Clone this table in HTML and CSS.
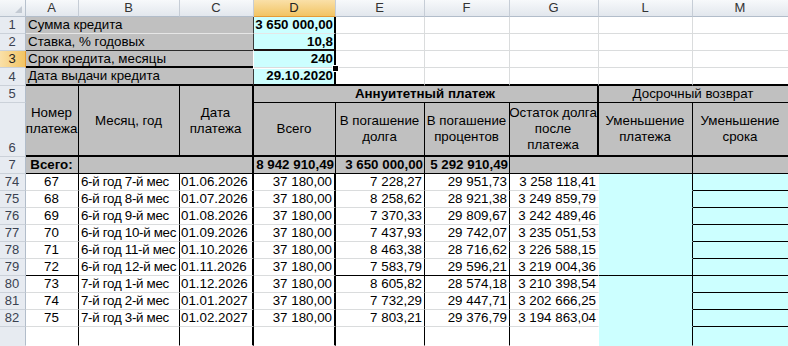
FILE: index.html
```html
<!DOCTYPE html>
<html lang="ru">
<head>
<meta charset="utf-8">
<title>Кредит</title>
<link rel="stylesheet" href="styles.css">
</head>
<body>
<div class="sheet">
  <div class="corner"><span class="tri"></span></div>
  <div class="ch">A</div><div class="ch">B</div><div class="ch">C</div><div class="ch chs">D</div><div class="ch">E</div><div class="ch">F</div><div class="ch">G</div><div class="ch">L</div><div class="ch nr">M</div>

  <div class="rh">1</div>
  <div class="g s3 bbl brd">Сумма кредита</div>
  <div class="cy r b bbl br2">3 650 000,00</div>
  <div></div><div></div><div></div><div></div><div class="nr"></div>

  <div class="rh">2</div>
  <div class="g s3 bbd brd">Ставка, % годовых</div>
  <div class="cy r b br2">10,8</div>
  <div></div><div></div><div></div><div></div><div class="nr"></div>

  <div class="rh rhs">3</div>
  <div class="g s3 bb2 brd">Срок кредита, месяцы</div>
  <div class="cy r b br2">240</div>
  <div></div><div></div><div></div><div></div><div class="nr"></div>

  <div class="rh">4</div>
  <div class="g s3 bb2 brd">Дата выдачи кредита</div>
  <div class="cy r b br2 bb2">29.10.2020</div>
  <div class="bb2"></div><div class="bb2"></div><div class="bb2"></div><div class="bb2"></div><div class="bb2 nr"></div>

  <div class="rh">5</div>
  <div class="g c v2 br1 bb2">Номер<br>платежа</div>
  <div class="g c v2 br1 bb2">Месяц, год</div>
  <div class="g c v2 br2 bb2">Дата<br>платежа</div>
  <div class="g c b s4 br2 bb1">Аннуитетный платеж</div>
  <div class="g c s2 bb1 nr">Досрочный возврат</div>

  <div class="rh">6</div>
  <div class="g c br1 bb2">Всего</div>
  <div class="g c br1 bb2">В погашение<br>долга</div>
  <div class="g c br1 bb2">В погашение<br>процентов</div>
  <div class="g c br2 bb2">Остаток долга<br>после<br>платежа</div>
  <div class="g c br1 bb2">Уменьшение<br>платежа</div>
  <div class="g c bb2 nr">Уменьшение<br>срока</div>

  <div class="rh">7</div>
  <div class="g c b br1 bb1">Всего:</div>
  <div class="g s2 br2 bb1"></div>
  <div class="g r b br1 bb1">8 942 910,49</div>
  <div class="g r b br1 bb1">3 650 000,00</div>
  <div class="g r b br1 bb1">5 292 910,49</div>
  <div class="g s2 br1 bb1"></div>
  <div class="g bb1 nr"></div>

  <div class="rh">74</div>
  <div class="c br1">67</div><div class="t br1">6-й год 7-й мес</div><div class="br2">01.06.2026</div>
  <div class="r br2">37 180,00</div><div class="r br1">7 228,27</div><div class="r br1">29 951,73</div><div class="r brn">3 258 118,41</div>
  <div class="cy br1 bbn"></div><div class="cy bb1 nr"></div>

  <div class="rh">75</div>
  <div class="c br1">68</div><div class="t br1">6-й год 8-й мес</div><div class="br2">01.07.2026</div>
  <div class="r br2">37 180,00</div><div class="r br1">8 258,62</div><div class="r br1">28 921,38</div><div class="r brn">3 249 859,79</div>
  <div class="cy br1 bbn"></div><div class="cy bb1 nr"></div>

  <div class="rh">76</div>
  <div class="c br1">69</div><div class="t br1">6-й год 9-й мес</div><div class="br2">01.08.2026</div>
  <div class="r br2">37 180,00</div><div class="r br1">7 370,33</div><div class="r br1">29 809,67</div><div class="r brn">3 242 489,46</div>
  <div class="cy br1 bbn"></div><div class="cy bb1 nr"></div>

  <div class="rh">77</div>
  <div class="c br1">70</div><div class="t br1">6-й год 10-й мес</div><div class="br2">01.09.2026</div>
  <div class="r br2">37 180,00</div><div class="r br1">7 437,93</div><div class="r br1">29 742,07</div><div class="r brn">3 235 051,53</div>
  <div class="cy br1 bbn"></div><div class="cy bb1 nr"></div>

  <div class="rh">78</div>
  <div class="c br1">71</div><div class="t br1">6-й год 11-й мес</div><div class="br2">01.10.2026</div>
  <div class="r br2">37 180,00</div><div class="r br1">8 463,38</div><div class="r br1">28 716,62</div><div class="r brn">3 226 588,15</div>
  <div class="cy br1 bbn"></div><div class="cy bb1 nr"></div>

  <div class="rh">79</div>
  <div class="c br1 bb1">72</div><div class="t br1">6-й год 12-й мес</div><div class="br2">01.11.2026</div>
  <div class="r br2">37 180,00</div><div class="r br1 bb1">7 583,79</div><div class="r br1 bb1">29 596,21</div><div class="r brn bb1">3 219 004,36</div>
  <div class="cy br1 bb1"></div><div class="cy bb1 nr"></div>

  <div class="rh">80</div>
  <div class="c br1">73</div><div class="t br1">7-й год 1-й мес</div><div class="br2">01.12.2026</div>
  <div class="r br2">37 180,00</div><div class="r br1">8 605,82</div><div class="r br1">28 574,18</div><div class="r brn">3 210 398,54</div>
  <div class="cy br1 bbn"></div><div class="cy bb1 nr"></div>

  <div class="rh">81</div>
  <div class="c br1">74</div><div class="t br1">7-й год 2-й мес</div><div class="br2">01.01.2027</div>
  <div class="r br2">37 180,00</div><div class="r br1">7 732,29</div><div class="r br1">29 447,71</div><div class="r brn">3 202 666,25</div>
  <div class="cy br1 bbn"></div><div class="cy bb1 nr"></div>

  <div class="rh">82</div>
  <div class="c br1">75</div><div class="t br1">7-й год 3-й мес</div><div class="br2">01.02.2027</div>
  <div class="r br2">37 180,00</div><div class="r br1">7 803,21</div><div class="r br1">29 376,79</div><div class="r brn">3 194 863,04</div>
  <div class="cy br1 bbn"></div><div class="cy bb1 nr"></div>

  <div class="rh bbn"></div>
  <div class="br1 bbn"></div><div class="br1 bbn"></div><div class="br2 bbn"></div>
  <div class="br2 bbn"></div><div class="br1 bbn"></div><div class="br1 bbn"></div><div class="brn bbn"></div>
  <div class="cy br1 bbn"></div><div class="cy bbn nr"></div>

  <div class="sel"><span class="handle"></span></div>
</div>
</body>
</html>
```
FILE: styles.css
```css
body {
  margin: 0;
  background: #fff;
  font-family: "Liberation Sans", Arial, sans-serif;
  font-size: 13.33px;
  color: #000;
}

.sheet {
  position: relative;
  display: grid;
  grid-template-columns: 26px 53px 101px 74px 82px 89px 85px 89px 94px 95px;
  grid-template-rows: 17px 17px 17px 17px 18px 17px 54px 17px repeat(9, 17px) 19px;
  width: 788px;
  height: 346px;
  overflow: hidden;
  background: #fff;
}

.sheet > * {
  box-sizing: border-box;
  border-right: 1px solid #dadcdd;
  border-bottom: 1px solid #dadcdd;
  display: flex;
  align-items: center;
  white-space: nowrap;
  padding: 0 2px 0 1px;
  line-height: 16px;
  min-width: 0;
}

.corner {
  background: linear-gradient(#f6f8fa, #e3e8ee);
  border-right-color: #b7c1cd;
  border-bottom-color: #b7c1cd;
  justify-content: flex-end;
  align-items: flex-end;
  padding: 0 3px 3px 0;
}
.tri {
  width: 0;
  height: 0;
  border-left: 7px solid transparent;
  border-bottom: 7px solid #c3cad3;
}

.ch {
  background: linear-gradient(#f7f9fb, #e2e7ed);
  border-right-color: #c6cdd6;
  border-bottom-color: #b2bdca;
  color: #333;
  font-size: 13px;
  justify-content: center;
}
.chs {
  background: linear-gradient(#fae0a8, #f2c463);
  border-bottom-color: #e59a35;
  color: #222;
}

.rh {
  background: #e7ebf1;
  border-right-color: #b2bdca;
  border-bottom-color: #cbd1d9;
  color: #3a4150;
  font-size: 13px;
  justify-content: center;
  align-items: flex-end;
  line-height: 16px;
}
.rhs {
  background: linear-gradient(90deg, #fae0a8, #f2c463);
  border-right-color: #e59a35;
  color: #222;
}

.g.s3 { padding-left: 2px; }
.t { letter-spacing: -0.3px; padding-left: 2px; }
.c { justify-content: center; text-align: center; }
.r { justify-content: flex-end; }
.b { font-weight: bold; }
.b.r { padding-right: 1px; padding-left: 0; }

.g { background: #c0c0c0; }
.cy { background: #ccffff; }

.s2 { grid-column: span 2; }
.s3 { grid-column: span 3; }
.s4 { grid-column: span 4; }
.v2 { grid-row: span 2; }

.br1 { border-right-color: #000; }
.br2 { border-right: 2px solid #000; }
.brd { border-right-color: #3a3a3a; }
.brn { border-right-color: transparent; }
.nr { border-right: 0; }

.bb1 { border-bottom-color: #000; }
.bb2 { border-bottom: 2px solid #000; }
.bbl { border-bottom-color: #e6e6e6; }
.bbd { border-bottom-color: #2a2a2a; }
.bbn { border-bottom-color: transparent; }

.sel {
  position: absolute;
  left: 253px;
  top: 49px;
  width: 83px;
  height: 20px;
  padding: 0;
  border-top: 2px solid #1c1010;
  border-right: 2px solid #000;
  border-left: 1px solid #fff;
  border-bottom: 1px solid #fff;
  pointer-events: none;
}
.handle {
  position: absolute;
  right: -5px;
  bottom: -4px;
  width: 5px;
  height: 5px;
  background: #000;
  border: 1px solid #fff;
}
```
